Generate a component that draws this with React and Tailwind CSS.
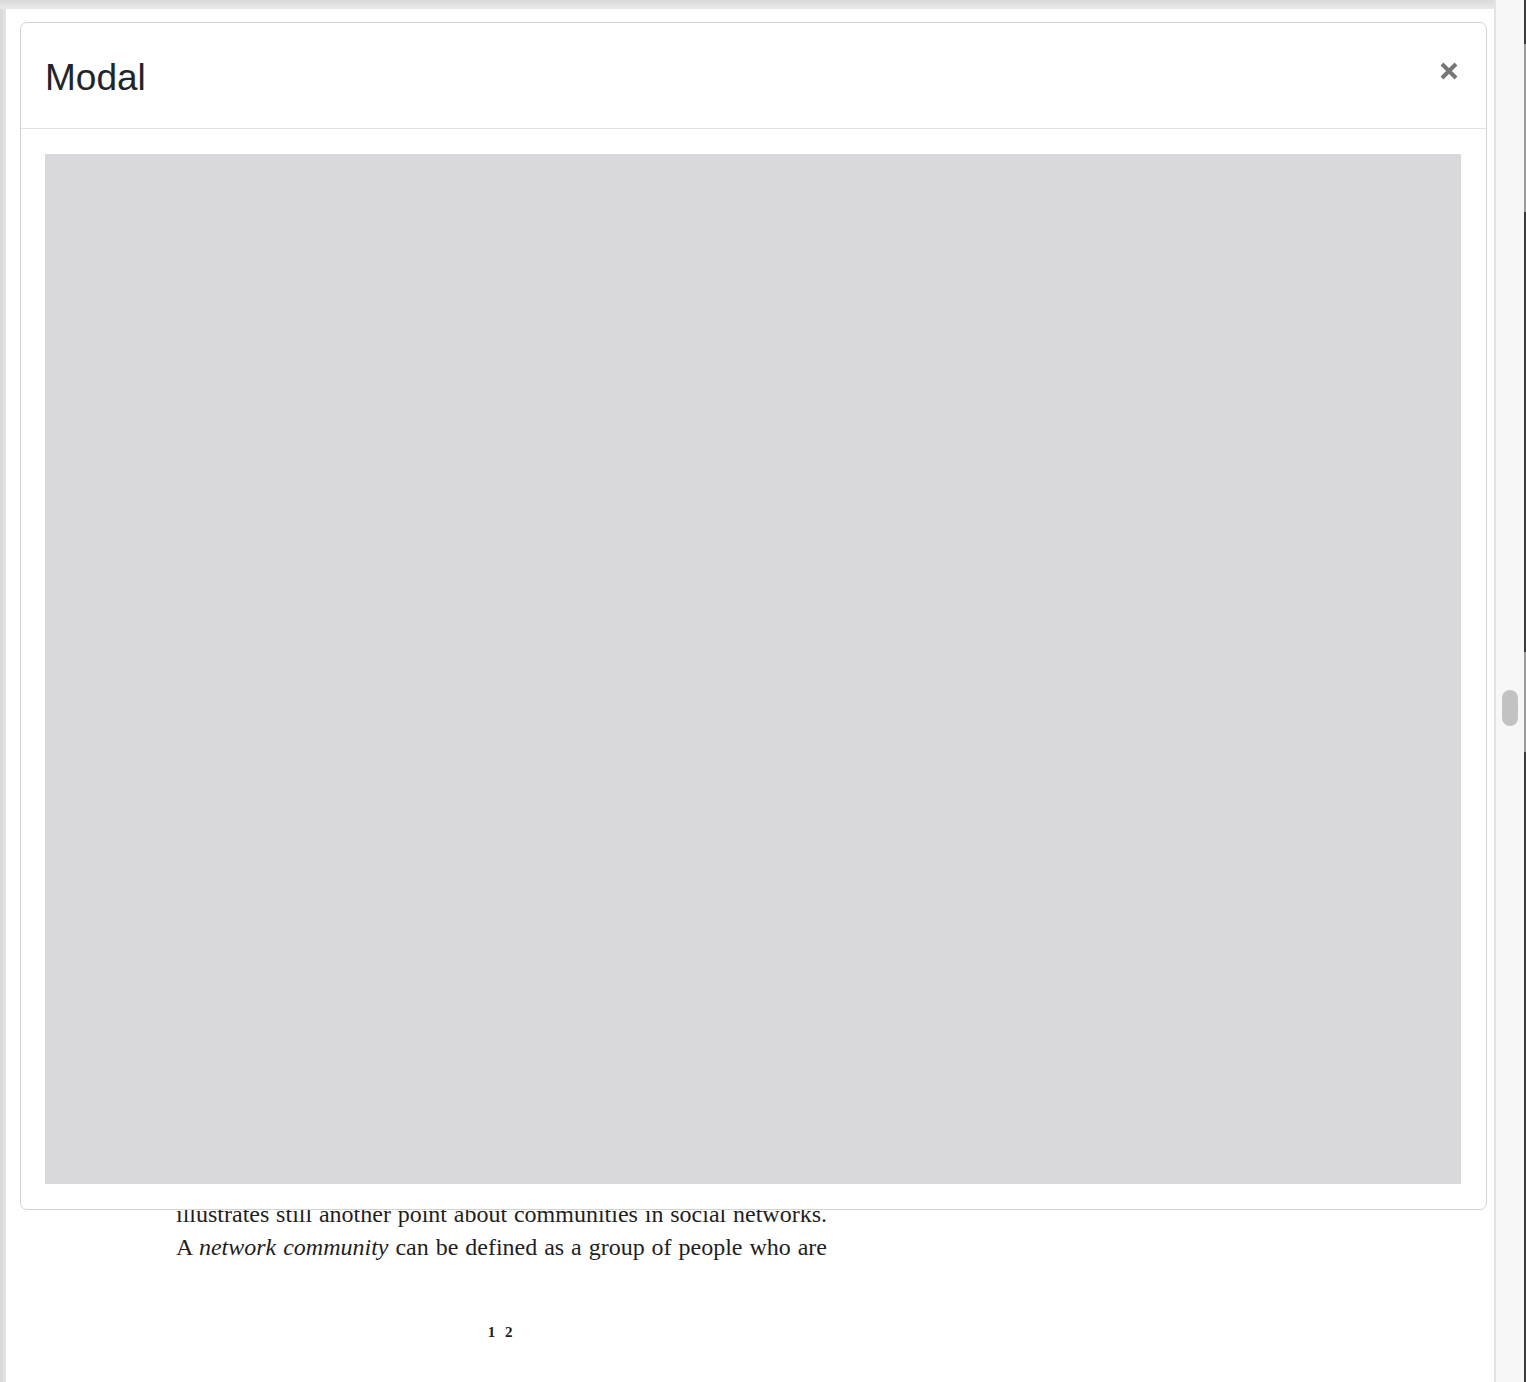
export default function App() {
  return (
    <div className="w-[1526px] h-[1382px] flex overflow-hidden bg-white">
      {/* main window area */}
      <div className="w-[1494px] flex flex-col">
        <div className="h-[9px] bg-gradient-to-b from-[#d9d9d9] to-[#e9e9e9]" />
        <div className="flex-1 flex">
          <div className="w-[6px] bg-gradient-to-r from-[#d6d6d6] to-[#e6e6e6]" />
          <div className="flex-1 relative bg-white">
            {/* book page content */}
            <div className="pt-[1189px] pl-[170px]">
              <div className="w-[651px] text-[#1e1e1e] text-[24px] leading-[33px]" style={{ fontFamily: '"Liberation Serif", "DejaVu Serif", serif' }}>
                <p className="whitespace-nowrap text-justify [text-align-last:justify]">
                  illustrates still another point about communities in social networks.
                </p>
                <p className="whitespace-nowrap text-justify [text-align-last:justify]">
                  A <i>network community</i> can be defined as a group of people who are
                </p>
                <p className="mt-[61px] text-center text-[15px] leading-[15px] font-semibold tracking-[3px]">1 2</p>
              </div>
            </div>

            {/* modal overlay */}
            <div className="absolute left-[14px] top-[13px] w-[1467px] h-[1188px] bg-white border border-[#d4d4d4] rounded-[7px] flex flex-col" style={{ fontFamily: '"Liberation Sans", Arial, sans-serif' }}>
              <div className="h-[106px] shrink-0 border-b border-[#dee2e6] flex items-start justify-between pl-[24px] pr-[27px]">
                <h5 className="mt-[33px] text-[37px] leading-[44px] text-[#212529]">Modal</h5>
                <svg className="mt-[38px]" width="20" height="20" viewBox="0 0 20 20">
                  <path d="M3 3 L17 17 M17 3 L3 17" stroke="#767676" strokeWidth="4" strokeLinecap="butt" />
                </svg>
              </div>
              <div className="flex-1 pl-[24px] pr-[25px] py-[25px]">
                <div className="w-full h-full bg-[#d9d9db]" />
              </div>
            </div>
          </div>
        </div>
      </div>

      {/* right scrollbar gutter */}
      <div className="w-[30px] border-l-2 border-[#e3e3e3] bg-[#f7f7f7] pt-[690px] pl-[6px]">
        <div className="w-[16px] h-[36px] rounded-full bg-[#c2c2c2]" />
      </div>
      <div className="w-[2px] flex flex-col">
        <div className="h-[44px] bg-[#3a3a3a]" />
        <div className="h-[168px] bg-[#9a9a9a]" />
        <div className="h-[440px] bg-[#3a3a3a]" />
        <div className="h-[100px] bg-[#9a9a9a]" />
        <div className="h-[590px] bg-[#3a3a3a]" />
        <div className="flex-1 bg-[#3a3a3a]" />
      </div>
    </div>
  );
}
